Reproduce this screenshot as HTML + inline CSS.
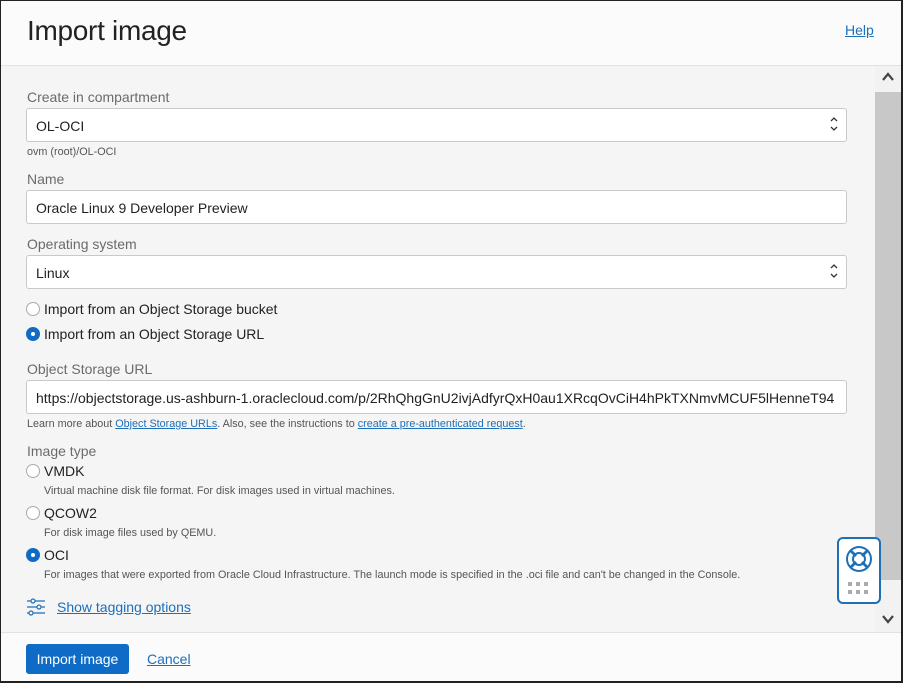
<!DOCTYPE html>
<html><head><meta charset="utf-8"><style>
*{box-sizing:border-box;margin:0;padding:0}
body{width:903px;height:683px;overflow:hidden;font-family:"Liberation Sans",Arial,sans-serif;background:#fff;position:relative}
.frame{position:absolute;left:0;top:0;width:903px;height:683px;border:1px solid #222;border-right-width:2px;border-bottom-width:2px;z-index:10;pointer-events:none}
.hdr{position:absolute;left:0;top:0;width:903px;height:66px;background:#fbfbfb;border-bottom:1px solid #e2e2e2}
.hdr h1{position:absolute;left:27px;top:15px;font-size:28px;font-weight:normal;color:#222;letter-spacing:-0.3px}
.help{position:absolute;left:845px;top:22px;font-size:14px;color:#1d6fb8;text-decoration:underline}
.body{position:absolute;left:0;top:66px;width:875px;height:566px;background:#f5f5f5}
.sb{position:absolute;left:875px;top:66px;width:26px;height:566px;background:#f2f2f2}
.thumb{position:absolute;left:875px;top:92px;width:26px;height:488px;background:#c8c8c8}
.lbl{position:absolute;left:27px;font-size:14px;color:#6b6b6b}
.inp{position:absolute;left:26px;width:821px;height:34px;background:#fff;border:1px solid #c9c9c9;border-radius:3px;font-size:14px;color:#222;padding:9px 0 0 9px;white-space:nowrap;overflow:hidden}
.sm{position:absolute;left:27px;font-size:10.8px;color:#555;white-space:nowrap}
.sm2{position:absolute;left:44px;font-size:10.8px;color:#555;white-space:nowrap}
.rad{position:absolute;left:26px;width:14px;height:14px;border-radius:50%;border:1px solid #aaa;background:#fff}
.rad.on{background:#0f6cc6;border-color:#0f6cc6}
.rad.on::after{content:"";position:absolute;left:4px;top:4px;width:4px;height:4px;border-radius:50%;background:#fff}
.rt{position:absolute;left:44px;font-size:14px;color:#222}
a{color:#1d6fb8;text-decoration:underline}
.ftr{position:absolute;left:0;top:632px;width:903px;height:51px;background:#fbfbfb;border-top:1px solid #e2e2e2}
.btn{position:absolute;left:26px;top:644px;width:103px;height:30px;background:#0f6cc6;border-radius:3px;color:#fff;font-size:14px;padding-top:7px;text-align:center}
</style></head><body>
<div class="hdr"><h1>Import image</h1><span class="help">Help</span></div>
<div class="body"></div>
<div class="sb"></div><div class="thumb"></div>
<svg style="position:absolute;left:881px;top:71px" width="14" height="12"><path d="M2 9 L7 3 L12 9" stroke="#444" stroke-width="2.2" fill="none"/></svg>
<svg style="position:absolute;left:881px;top:613px" width="14" height="12"><path d="M2 3 L7 9 L12 3" stroke="#444" stroke-width="2.2" fill="none"/></svg>

<div class="lbl" style="top:89px">Create in compartment</div>
<div class="inp" style="top:108px">OL-OCI</div>
<svg style="position:absolute;left:829px;top:116px" width="10" height="16"><path d="M2 5l3-3 3 3M2 11l3 3 3-3" stroke="#333" stroke-width="1.3" fill="none"/></svg>
<div class="sm" style="top:146px">ovm (root)/OL-OCI</div>
<div class="lbl" style="top:171px">Name</div>
<div class="inp" style="top:190px">Oracle Linux 9 Developer Preview</div>
<div class="lbl" style="top:236px">Operating system</div>
<div class="inp" style="top:255px">Linux</div>
<svg style="position:absolute;left:829px;top:263px" width="10" height="16"><path d="M2 5l3-3 3 3M2 11l3 3 3-3" stroke="#333" stroke-width="1.3" fill="none"/></svg>
<div class="rad" style="top:302px"></div><div class="rt" style="top:301px">Import from an Object Storage bucket</div>
<div class="rad on" style="top:327px"></div><div class="rt" style="top:326px">Import from an Object Storage URL</div>
<div class="lbl" style="top:361px">Object Storage URL</div>
<div class="inp" style="top:380px">https://objectstorage.us-ashburn-1.oraclecloud.com/p/2RhQhgGnU2ivjAdfyrQxH0au1XRcqOvCiH4hPkTXNmvMCUF5lHenneT94</div>
<div class="sm" style="top:418px">Learn more about <a>Object Storage URLs</a>. Also, see the instructions to <a>create a pre-authenticated request</a>.</div>
<div class="lbl" style="top:443px">Image type</div>
<div class="rad" style="top:464px"></div><div class="rt" style="top:463px">VMDK</div>
<div class="sm2" style="top:485px">Virtual machine disk file format. For disk images used in virtual machines.</div>
<div class="rad" style="top:506px"></div><div class="rt" style="top:505px">QCOW2</div>
<div class="sm2" style="top:527px">For disk image files used by QEMU.</div>
<div class="rad on" style="top:548px"></div><div class="rt" style="top:547px">OCI</div>
<div class="sm2" style="top:569px">For images that were exported from Oracle Cloud Infrastructure. The launch mode is specified in the .oci file and can't be changed in the Console.</div>
<svg style="position:absolute;left:26px;top:598px" width="20" height="18"><g stroke="#1d6fb8" stroke-width="1.2" fill="none"><path d="M1 3h4M9 3h10M1 9h10M15 9h4M1 15h2M7 15h12"/><circle cx="7" cy="3" r="2"/><circle cx="13" cy="9" r="2"/><circle cx="5" cy="15" r="2"/></g></svg>
<a style="position:absolute;left:57px;top:599px;font-size:14px">Show tagging options</a>

<div style="position:absolute;left:837px;top:537px;width:44px;height:67px;background:#fff;border:2px solid #1d6fb8;border-radius:6px"></div>
<svg style="position:absolute;left:843px;top:543px" width="32" height="32">
<circle cx="16" cy="16" r="13" fill="#1d6fb8"/>
<circle cx="16" cy="16" r="11" fill="#fff"/>
<circle cx="16" cy="16" r="7" fill="#1d6fb8"/>
<circle cx="16" cy="16" r="5" fill="#fff"/>
<g fill="#1d6fb8"><path d="M7 9 L9 7 L14 12 L12 14Z"/><path d="M25 9 L23 7 L18 12 L20 14Z"/><path d="M7 23 L9 25 L14 20 L12 18Z"/><path d="M25 23 L23 25 L18 20 L20 18Z"/></g>
</svg>
<svg style="position:absolute;left:847px;top:581px" width="24" height="14"><g fill="#aaa"><rect x="1" y="1" width="4" height="4"/><rect x="9" y="1" width="4" height="4"/><rect x="17" y="1" width="4" height="4"/><rect x="1" y="9" width="4" height="4"/><rect x="9" y="9" width="4" height="4"/><rect x="17" y="9" width="4" height="4"/></g></svg>

<div class="ftr"></div>
<div class="btn">Import image</div>
<a style="position:absolute;left:147px;top:651px;font-size:14px">Cancel</a>
<div class="frame"></div>
</body></html>
